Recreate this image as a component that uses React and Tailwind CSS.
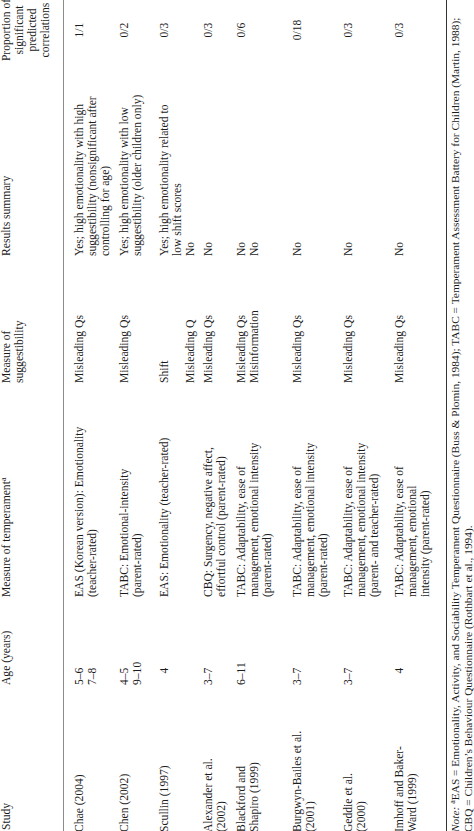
const COLS = "grid grid-cols-[147px_88px_214px_127px_166px_120px]";

const rows = [
	{
		h: "h-[45px]",
		study: ["Chae (2004)"],
		age: ["5–6", "7–8"],
		temp: ["EAS (Korean version): Emotionality", "(teacher-rated)"],
		sugg: ["Misleading Qs"],
		res: [
			"Yes; high emotionality with high",
			"suggestibility (nonsignificant after",
			"controlling for age)",
		],
		prop: "1/1",
	},
	{
		h: "h-[40px]",
		study: ["Chen (2002)"],
		age: ["4–5", "9–10"],
		temp: ["TABC: Emotional-intensity", "(parent-rated)"],
		sugg: ["Misleading Qs"],
		res: [
			"Yes; high emotionality with low",
			"suggestibility (older children only)",
		],
		prop: "0/2",
	},
	{
		h: "h-[44px]",
		study: ["Scullin (1997)"],
		age: ["4"],
		indent: true,
		temp: ["EAS: Emotionality (teacher-rated)"],
		sugg: ["Shift", "\u00a0", "Misleading Q"],
		res: ["Yes; high emotionality related to", "low shift scores", "No"],
		prop: "0/3",
	},
	{
		h: "h-[33px]",
		study: ["Alexander et al.", "(2002)"],
		age: ["3–7"],
		temp: ["CBQ: Surgency, negative affect,", "effortful control (parent-rated)"],
		sugg: ["Misleading Qs"],
		res: ["No"],
		prop: "0/3",
	},
	{
		h: "h-[56px]",
		study: ["Blackford and", "Shapiro (1999)"],
		age: ["6–11"],
		temp: [
			"TABC: Adaptability, ease of",
			"management, emotional intensity",
			"(parent-rated)",
		],
		sugg: ["Misleading Qs", "Misinformation"],
		res: ["No", "No"],
		prop: "0/6",
	},
	{
		h: "h-[51px]",
		study: ["Burgwyn-Bailes et al.", "(2001)"],
		age: ["3–7"],
		temp: [
			"TABC: Adaptability, ease of",
			"management, emotional intensity",
			"(parent-rated)",
		],
		sugg: ["Misleading Qs"],
		res: ["No"],
		prop: "0/18",
	},
	{
		h: "h-[51px]",
		study: ["Geddie et al.", "(2000)"],
		age: ["3–7"],
		temp: [
			"TABC: Adaptability, ease of",
			"management, emotional intensity",
			"(parent- and teacher-rated)",
		],
		sugg: ["Misleading Qs"],
		res: ["No"],
		prop: "0/3",
	},
	{
		h: "h-[53px]",
		study: ["Imhoff and Baker-", "Ward (1999)"],
		age: ["4"],
		indent: true,
		temp: [
			"TABC: Adaptability, ease of",
			"management, emotional",
			"intensity (parent-rated)",
		],
		sugg: ["Misleading Qs"],
		res: ["No"],
		prop: "0/3",
	},
];

function Lines({ lines, className = "" }) {
	return (
		<div className={className}>
			{lines.map((l, i) => (
				<div key={i} className="whitespace-nowrap">
					{l}
				</div>
			))}
		</div>
	);
}

function Row({ row }) {
	return (
		<div className={`${COLS} ${row.h} items-start`}>
			<Lines lines={row.study} />
			<Lines lines={row.age} className={row.indent ? "pl-[11.6px]" : ""} />
			<Lines lines={row.temp} />
			<Lines lines={row.sugg} />
			<Lines lines={row.res} />
			<div className="text-center whitespace-nowrap">{row.prop}</div>
		</div>
	);
}

export default function App() {
	return (
		<div className="relative w-[474px] h-[831px] overflow-hidden bg-white">
			<div className="absolute left-0 top-0 w-[831px] h-[474px] origin-top-left translate-y-[831px] -rotate-90 font-['Liberation_Serif',serif] text-[11.6px] leading-[13px] text-[#1c1c1c]">
				<div className="-ml-px">
					<div className={`${COLS} h-[64px] items-start border-b border-[#8c8c8c]`}>
						<div className="pl-[2px]">Study</div>
						<div>Age (years)</div>
						<div className="whitespace-nowrap">
							Measure of temperament
							<sup className="text-[8px]">a</sup>
						</div>
						<Lines lines={["Measure of", "suggestibility"]} />
						<div>Results summary</div>
						<Lines
							lines={["Proportion of", "significant", "predicted", "correlations"]}
							className="text-center"
						/>
					</div>
					<div className="pt-[9px] border-b border-[#333]">
						{rows.map((r, i) => (
							<Row key={i} row={r} />
						))}
					</div>
					<div className="pt-[2px] text-[11.4px] leading-[12.5px]">
						<div className="whitespace-nowrap">
							<span className="italic">Note:</span>{" "}
							<sup className="text-[8px]">a</sup>EAS = Emotionality, Activity, and
							Sociability Temperament Questionnaire (Buss &amp; Plomin, 1984); TABC =
							Temperament Assessment Battery for Children (Martin, 1988);
						</div>
						<div className="whitespace-nowrap">
							CBQ = Children’s Behaviour Questionnaire (Rothbart et al., 1994).
						</div>
					</div>
				</div>
			</div>
		</div>
	);
}
